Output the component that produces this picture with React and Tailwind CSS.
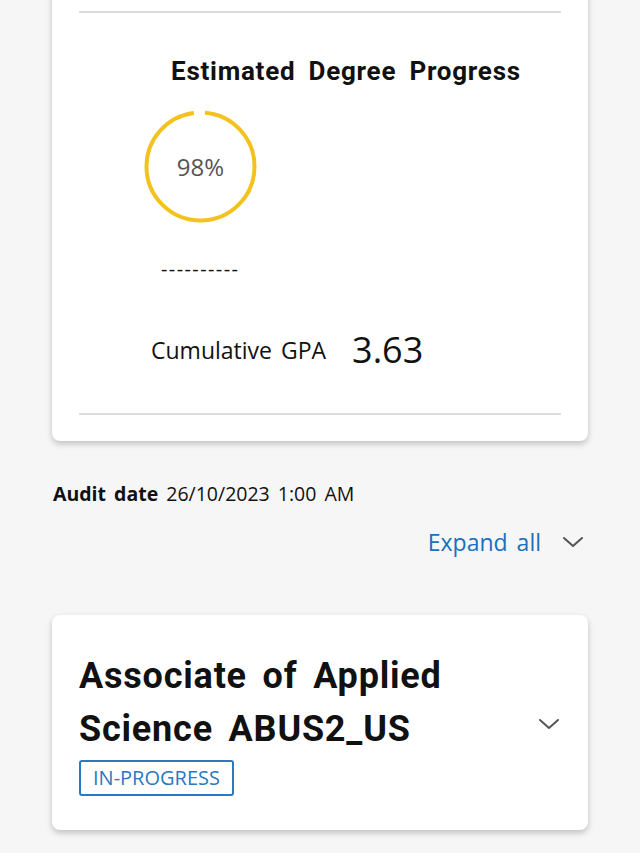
import React from "react";

const ChevronDown = ({ className }) => (
  <svg viewBox="0 0 24 24" className={className} fill="none" stroke="currentColor" strokeWidth="2" strokeLinecap="round" strokeLinejoin="round">
    <path d="M3 8l9 8 9-8" />
  </svg>
);

// progress ring, small gap at the top for the missing 2%
const ProgressRing = ({ percent }) => {
  const r = 54;
  const c = 2 * Math.PI * r;
  const gap = 5;
  return (
    <div className="relative w-[113px] h-[113px]">
      <svg viewBox="0 0 113 113" className="w-full h-full -rotate-90">
        <circle
          cx="56.5"
          cy="56.5"
          r={r}
          fill="none"
          stroke="#f4c21f"
          strokeWidth="4"
          strokeDasharray={`${(c * percent) / 100 - gap} ${c}`}
          strokeDashoffset={-gap / 2 - 2}
        />
      </svg>
      <div className="absolute inset-0 flex items-center justify-center text-[24px] text-[#555] font-['Open_Sans',sans-serif]">
        {percent}%
      </div>
    </div>
  );
};

export default function App() {
  return (
    <div className="min-h-[853px] bg-[#f6f6f6] font-['Open_Sans',sans-serif] text-[#111] overflow-hidden">
      <div className="mx-[52px] -mt-[23px] rounded-lg bg-white shadow-[0_3px_6px_rgba(0,0,0,0.22)] px-[27px] pt-[34px] pb-[26px]">
        <div className="border-t-2 border-[#dcdcdc]" />
        <h2 className="mt-[42px] ml-[92px] text-[26px] leading-[32px] font-bold font-['Roboto',sans-serif] [word-spacing:6px] tracking-[0.75px]">
          Estimated Degree Progress
        </h2>
        <div className="mt-[23px] ml-[65px]">
          <ProgressRing percent={98} />
        </div>
        <div className="mt-[34px] ml-[82px] text-[20px] leading-[24px] tracking-[1.4px]">----------</div>
        <div className="mt-[47px] ml-[72px] flex items-center h-[44px]">
          <span className="text-[23px] [word-spacing:3px]">Cumulative GPA</span>
          <span className="ml-[26px] text-[36px]">3.63</span>
        </div>
        <div className="mt-[41px] border-t-2 border-[#dcdcdc]" />
      </div>

      <div className="mt-[41px] ml-[53px] text-[19.5px] leading-[24px] [word-spacing:3px]">
        <span className="font-bold">Audit date</span> 26/10/2023 1:00 AM
      </div>

      <div className="mt-[21px] mr-[55px] flex items-center justify-end h-[30px]">
        <span className="text-[23px] text-[#1a70bd] [word-spacing:3px]">Expand all</span>
        <ChevronDown className="ml-[20px] w-[24px] h-[24px] text-[#555]" />
      </div>

      <div className="mx-[52px] mt-[58px] rounded-lg bg-white shadow-[0_3px_6px_rgba(0,0,0,0.22)] pl-[27px] pr-[27px] pt-[35px] pb-[34px] flex items-center">
        <div className="flex-1">
          <h3 className="w-[420px] text-[36px] leading-[53px] font-bold font-['Roboto',sans-serif] [word-spacing:6px] tracking-[0.8px]">
            Associate of Applied Science ABUS2_US
          </h3>
          <span className="mt-[4px] inline-block border-2 border-[#2a78c0] rounded-[3px] px-[12px] h-[36px] leading-[32px] text-[20px] text-[#2a78c0]">
            IN-PROGRESS
          </span>
        </div>
        <ChevronDown className="w-[24px] h-[24px] text-[#555] mt-[2px]" />
      </div>
    </div>
  );
}
